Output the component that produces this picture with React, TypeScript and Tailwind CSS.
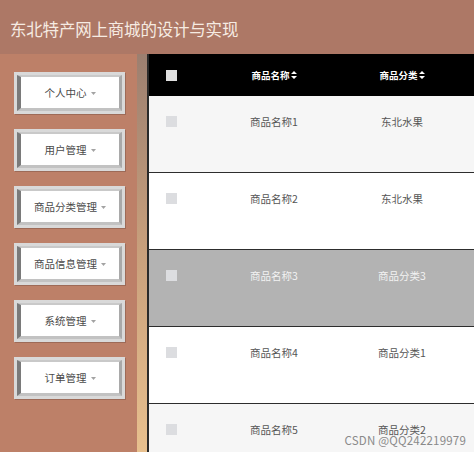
const menus = ['个人中心', '用户管理', '商品分类管理', '商品信息管理', '系统管理', '订单管理'];

const rows = [
    { name: '商品名称1', cat: '东北水果', bg: 'bg-[#f6f6f6]', text: 'text-[#555]' },
    { name: '商品名称2', cat: '东北水果', bg: 'bg-white', text: 'text-[#555]' },
    { name: '商品名称3', cat: '商品分类3', bg: 'bg-[#b3b3b3]', text: 'text-[#f2f2f2]' },
    { name: '商品名称4', cat: '商品分类1', bg: 'bg-white', text: 'text-[#555]' },
    { name: '商品名称5', cat: '商品分类2', bg: 'bg-[#f6f6f6]', text: 'text-[#555]' },
];

function SortIcon() {
    return (
        <svg width="6" height="8" viewBox="0 0 6 8" className="ml-[1px]">
            <path d="M3 0 L6 3 H0 Z M3 8 L0 5 H6 Z" fill="currentColor" />
        </svg>
    );
}

function Caret() {
    return (
        <svg width="5" height="3" viewBox="0 0 5 3" className="ml-[4px] mt-[1px]">
            <path d="M0 0 H5 L2.5 3 Z" fill="#a3a3a3" />
        </svg>
    );
}

export default function App() {
    return (
        <div
            className="w-[474px] h-[452px] overflow-hidden relative flex flex-col bg-[#b07a67]"
            style={{ fontFamily: '"Noto Sans CJK SC", "Noto Sans", sans-serif' }}
        >
            {/* Header */}
            <header className="h-[54px] shrink-0 flex items-center pl-[10px] bg-[#ad7866]">
                <h1 className="text-[16.5px] text-[#f6ebe2] tracking-[-0.2px] mt-[4px]">东北特产网上商城的设计与实现</h1>
            </header>

            <div className="flex flex-1 min-h-0">
                {/* Sidebar */}
                <aside className="w-[137px] shrink-0 bg-[#bd8068] flex flex-col gap-[15px] pt-[18px] pl-[14px]">
                    {menus.map((m) => (
                        <div key={m} className="w-[111px] h-[42px] bg-[#d9d9d9] p-[3px] shadow-[1px_1px_0_#9d6a57]">
                            <div className="h-full border-l-[4px] border-l-[#7a7a7a] border-t-[2px] border-t-[#c9c9c9] border-r-[3px] border-r-[#a9a9a9] border-b-[3px] border-b-[#c2c2c2] bg-white flex items-center justify-center text-[10.5px] text-[#4a4a4a]">
                                {m}
                                <Caret />
                            </div>
                        </div>
                    ))}
                </aside>

                {/* Divider strip */}
                <div className="w-[10px] shrink-0 bg-gradient-to-b from-[#9c7f70] via-[#c9a07c] to-[#e8c08e]" />

                {/* Table */}
                <main className="flex-1 border-l-2 border-[#2a2a2a] flex flex-col">
                    <div className="h-[42px] shrink-0 bg-black flex items-center text-white text-[9.5px] font-bold">
                        <div className="w-[50px] pl-[17px]">
                            <span className="block w-[11px] h-[11px] bg-[#e0e0e0]" />
                        </div>
                        <div className="w-[150px] flex items-center justify-center">
                            商品名称<SortIcon />
                        </div>
                        <div className="w-[106px] flex items-center justify-center">
                            商品分类<SortIcon />
                        </div>
                    </div>
                    {rows.map((r) => (
                        <div key={r.name} className={`h-[77px] shrink-0 border-b border-[#2d2d2d] flex items-start pt-[18px] text-[10.5px] ${r.bg} ${r.text}`}>
                            <div className="w-[50px] pl-[17px] pt-[2px]">
                                <span className="block w-[11px] h-[11px] bg-[#dcdde0]" />
                            </div>
                            <div className="w-[150px] text-center">{r.name}</div>
                            <div className="w-[106px] text-center">{r.cat}</div>
                        </div>
                    ))}
                </main>
            </div>

            {/* Watermark */}
            <span className="absolute right-[8px] bottom-[3px] text-[11.5px] text-[#8a8a8a] tracking-[0.2px]">CSDN @QQ242219979</span>
        </div>
    );
}
